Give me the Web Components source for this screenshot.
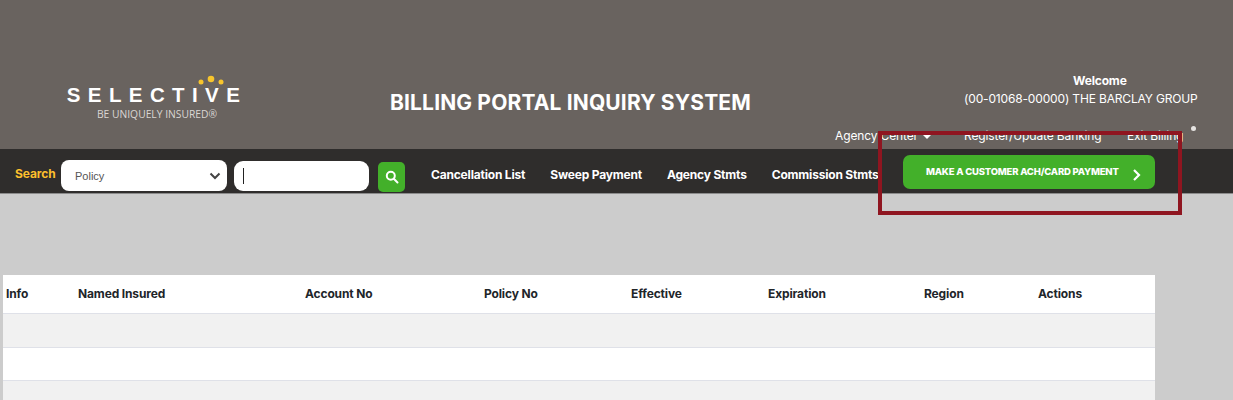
<!DOCTYPE html>
<html>
<head>
<meta charset="utf-8">
<title>Billing Portal Inquiry System</title>
<style>
    html, body { margin: 0; height: 400px; overflow: hidden; background: #cccccc; font-family: "Inter", "Liberation Sans", sans-serif; }
</style>
</head>
<body>
<portal-header></portal-header>
<portal-nav></portal-nav>
<results-table></results-table>
<callout-box></callout-box>

<script>
class PortalHeader extends HTMLElement {
    constructor() {
        super();
        this.attachShadow({ mode: 'open' });
        this.shadowRoot.innerHTML = `
            <style>
                :host { display: flex; flex-direction: column; height: 149px; background: #69635f; color: #fff; box-sizing: border-box; padding-top: 73px; }
                .top { display: flex; align-items: flex-start; padding-left: 67px; height: 51px; }
                .logo { width: 173px; flex: none; display: flex; flex-direction: column; align-items: center; position: relative; }
                .logo svg { position: absolute; left: 130px; top: 2px; }
                .brand { font: 700 20.5px/20px "Liberation Sans", sans-serif; letter-spacing: 7.4px; margin-top: 12px; white-space: nowrap; margin-right: -7px; }
                .tag { font: 400 10.3px/12px "Open Sans", sans-serif; color: #d9d6d3; margin: 3px 0 0 7px; white-space: nowrap; }
                h1 { margin: 17px 0 0 150px; width: 361px; flex: none; font: 700 21px/26px "Inter", "Liberation Sans", sans-serif; letter-spacing: 0.15px; white-space: nowrap; }
                .who { margin-left: 213px; font-size: 12px; letter-spacing: -0.16px; line-height: 18px; text-align: center; white-space: nowrap; margin-top: -1px; }
                .who b { display: block; font-weight: 700; padding-left: 38px; }
                .links { display: flex; font-size: 12px; letter-spacing: -0.13px; line-height: 16px; padding-left: 835px; white-space: nowrap; margin-top: 4px; }
                .agency { width: 129px; display: flex; align-items: center; gap: 5px; }
                .caret { width: 0; height: 0; border: 4px solid transparent; border-top-color: #fff; border-bottom: 0; margin-top: 2px; }
                .banking { width: 163px; }
                .dot { width: 5px; height: 5px; border-radius: 50%; background: #e6e4e2; margin: -2px 0 0 8px; }
            </style>
            <div class="top">
                <div class="logo">
                    <svg width="28" height="10" viewBox="0 0 28 10"><circle cx="4" cy="7" r="2.500" fill="#f7c52d"/><circle cx="14" cy="4" r="3.300" fill="#f7c52d"/><circle cx="24" cy="7" r="2.500" fill="#f7c52d"/></svg>
                    <div class="brand">SELECTIVE</div>
                    <div class="tag">BE UNIQUELY INSURED®</div>
                </div>
                <h1>BILLING PORTAL INQUIRY SYSTEM</h1>
                <div class="who"><b>Welcome</b>(00-01068-00000) THE BARCLAY GROUP</div>
            </div>
            <div class="links">
                <span class="agency">Agency Center <i class="caret"></i></span>
                <span class="banking">Register/Update Banking</span>
                <span>Exit Billing</span>
                <i class="dot"></i>
            </div>
        `;
    }
}

class PortalNav extends HTMLElement {
    constructor() {
        super();
        this.attachShadow({ mode: 'open' });
        this.shadowRoot.innerHTML = `
            <style>
                :host { display: flex; align-items: flex-start; height: 44px; box-sizing: content-box; background: #2f2d2c; border-bottom: 1px solid #8b8b8b; padding-left: 15px; font-size: 12px; line-height: 16px; font-weight: 700; color: #fff; white-space: nowrap; }
                .label { color: #fcbf2d; width: 46px; flex: none; margin-top: 17px; letter-spacing: -0.12px; }
                .select { width: 166px; height: 31px; margin-top: 11px; background: #fff; border-radius: 8px; display: flex; align-items: center; justify-content: space-between; padding: 0 5px 0 14px; box-sizing: border-box; color: #555; font: 400 11px "Liberation Sans", sans-serif; flex: none; }
                .input { width: 135px; height: 30px; margin: 12px 0 0 7px; background: #fff; border-radius: 9px; display: flex; align-items: center; padding-left: 9px; box-sizing: border-box; flex: none; }
                .input i { width: 1px; height: 16px; background: #222; }
                .go { width: 27px; height: 30px; margin: 13px 0 0 9px; background: #43b02a; border-radius: 5px; display: flex; align-items: center; justify-content: center; flex: none; }
                .links { display: flex; gap: 25px; margin: 18px 0 0 26px; width: 472px; flex: none; letter-spacing: -0.19px; }
                .pay { width: 252px; height: 34px; margin-top: 6px; background: #43b02a; border-radius: 7px; display: flex; align-items: center; padding-left: 23px; box-sizing: border-box; font-size: 9.5px; font-weight: 800; letter-spacing: -0.2px; flex: none; }
                .pay svg { margin: 5px 0 0 13px; }
            </style>
            <span class="label">Search</span>
            <div class="select">Policy
                <svg width="14" height="14" viewBox="0 0 14 14" fill="none" stroke="#444" stroke-width="2"><path d="M2.5 4.5 7 9l4.500-4.500"/></svg>
            </div>
            <div class="input"><i></i></div>
            <div class="go">
                <svg width="14" height="14" viewBox="0 0 14 14" fill="none" stroke="#fff" stroke-width="2"><circle cx="5.800" cy="5.800" r="4"/><path d="m8.800 8.800 3.700 3.700" stroke-linecap="round"/></svg>
            </div>
            <div class="links">
                <span>Cancellation List</span>
                <span>Sweep Payment</span>
                <span>Agency Stmts</span>
                <span>Commission Stmts</span>
            </div>
            <div class="pay">MAKE A CUSTOMER ACH/CARD PAYMENT
                <svg width="10" height="14" viewBox="0 0 10 14" fill="none" stroke="#fff" stroke-width="2.200"><path d="m2 2 5 5-5 5"/></svg>
            </div>
        `;
    }
}

class ResultsTable extends HTMLElement {
    constructor() {
        super();
        this.attachShadow({ mode: 'open' });
        const columns = ['Info', 'Named Insured', 'Account No', 'Policy No', 'Effective', 'Expiration', 'Region', 'Actions'];
        this.shadowRoot.innerHTML = `
            <style>
                :host { display: block; width: 1152px; margin: 81px 0 0 3px; background: #fff; }
                .row { display: grid; grid-template-columns: 72px 227px 179px 147px 137px 156px 114px 120px; border-bottom: 1px solid #dfe1e8; box-sizing: border-box; }
                .head { height: 39px; padding-bottom: 2px; align-items: center; font-size: 12px; letter-spacing: -0.14px; font-weight: 700; color: #212529; }
                .head span { padding-left: 3px; }
                .odd { height: 34px; background: #f1f1f1; }
                .even { height: 33px; background: #fff; }
            </style>
            <div class="row head">${columns.map(c => `<span>${c}</span>`).join('')}</div>
            <div class="row odd"></div>
            <div class="row even"></div>
            <div class="row odd"></div>
        `;
    }
}

class CalloutBox extends HTMLElement {
    constructor() {
        super();
        this.attachShadow({ mode: 'open' });
        this.shadowRoot.innerHTML = `
            <style>
                :host { position: absolute; left: 878px; top: 131px; width: 304px; height: 84px; box-sizing: border-box; border: 4px solid #8f1520; pointer-events: none; }
            </style>
        `;
    }
}

customElements.define('portal-header', PortalHeader);
customElements.define('portal-nav', PortalNav);
customElements.define('results-table', ResultsTable);
customElements.define('callout-box', CalloutBox);
</script>
</body>
</html>
